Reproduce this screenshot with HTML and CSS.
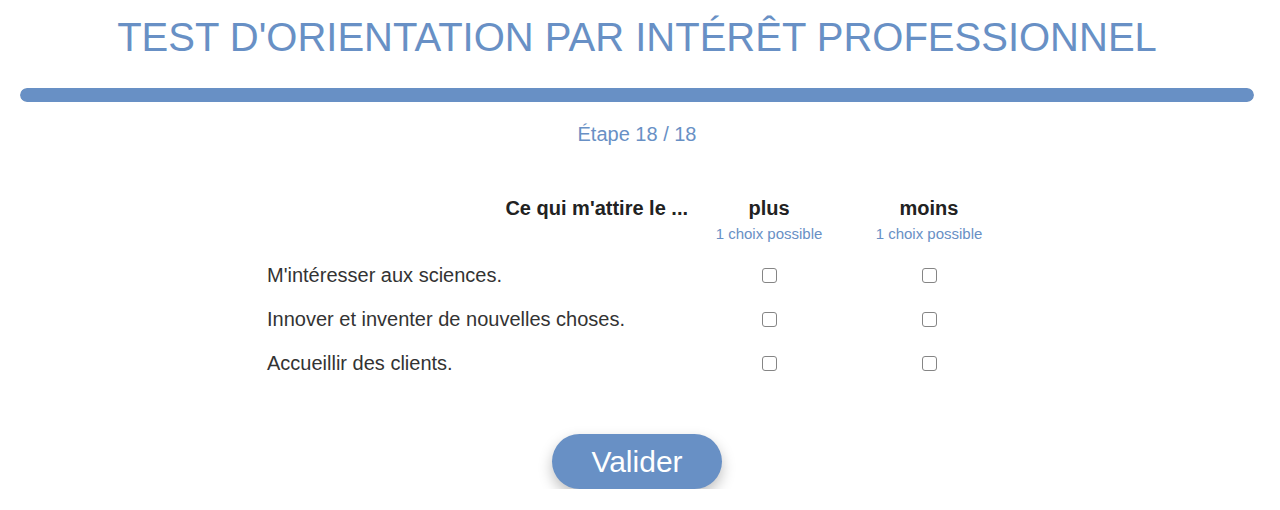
FILE: index.html
```html
<!DOCTYPE html>
<html lang="fr">
<head>
    <meta charset="UTF-8">
    <meta name="viewport" content="width=device-width, initial-scale=1.0">
    <title>Test d'orientation</title>
    <link rel="stylesheet" href="styles.css">
</head>
<body>
    <h1 class="title">TEST D'ORIENTATION PAR INTÉRÊT PROFESSIONNEL</h1>
    <div class="progress"><div class="progress-fill"></div></div>
    <p class="step">Étape 18 / 18</p>

    <form class="quiz">
        <div class="grid">
            <div class="head-label">Ce qui m'attire le ...</div>
            <div class="head-col">
                <span class="col-title">plus</span>
                <span class="col-sub">1 choix possible</span>
            </div>
            <div class="head-col">
                <span class="col-title">moins</span>
                <span class="col-sub">1 choix possible</span>
            </div>

            <div class="row-label">M'intéresser aux sciences.</div>
            <div class="cell"><input type="checkbox" name="plus" value="1"></div>
            <div class="cell"><input type="checkbox" name="moins" value="1"></div>

            <div class="row-label">Innover et inventer de nouvelles choses.</div>
            <div class="cell"><input type="checkbox" name="plus" value="2"></div>
            <div class="cell"><input type="checkbox" name="moins" value="2"></div>

            <div class="row-label">Accueillir des clients.</div>
            <div class="cell"><input type="checkbox" name="plus" value="3"></div>
            <div class="cell"><input type="checkbox" name="moins" value="3"></div>
        </div>

        <div class="actions">
            <button type="submit" class="btn">Valider</button>
        </div>
    </form>
</body>
</html>
```

FILE: styles.css
```css
body {
    font-family: "Liberation Sans", Arial, sans-serif;
    margin: 0;
    padding: 0 6px 0 0;
    background: #fff;
    color: #333;
}

.title {
    margin: 14px 0 0;
    font-size: 40px;
    line-height: 46px;
    font-weight: normal;
    text-align: center;
    color: #6890c5;
}

.progress {
    margin: 28px 20px 0 20px;
    height: 14px;
    border-radius: 7px;
    background: #e6e6e6;
    overflow: hidden;
}

.progress-fill {
    width: 100%;
    height: 100%;
    border-radius: 7px;
    background: #6890c5;
}

.step {
    margin: 20px 0 0;
    font-size: 20px;
    line-height: 24px;
    text-align: center;
    color: #6890c5;
}

.quiz {
    margin-top: 50px;
}

.grid {
    display: grid;
    grid-template-columns: 422px 160px 160px;
    justify-content: center;
    padding-left: 2px;
}

.head-label {
    font-size: 20px;
    font-weight: bold;
    line-height: 24px;
    text-align: right;
    color: #222;
    padding-right: 1px;
}

.head-col {
    display: flex;
    flex-direction: column;
    align-items: center;
    padding-bottom: 10px;
}

.col-title {
    font-size: 20px;
    font-weight: bold;
    line-height: 24px;
    color: #222;
}

.col-sub {
    margin-top: 5px;
    font-size: 15px;
    line-height: 18px;
    color: #6890c5;
}

.row-label {
    font-size: 20px;
    line-height: 44px;
    color: #333;
}

.cell {
    display: flex;
    justify-content: center;
    align-items: center;
    height: 44px;
}

.cell input {
    appearance: none;
    -webkit-appearance: none;
    margin: 0;
    width: 15px;
    height: 15px;
    border: 1px solid #858585;
    border-radius: 3px;
    background: #fff;
}

.actions {
    display: flex;
    justify-content: center;
    margin-top: 49px;
}

.btn {
    width: 170px;
    height: 55px;
    border: none;
    border-radius: 28px;
    background: #6890c5;
    color: #fff;
    font-family: "Liberation Sans", Arial, sans-serif;
    font-size: 30px;
    cursor: pointer;
    box-shadow: 0 6px 14px rgba(0,0,0,0.25);
}

.btn:hover {
    background: #5a80b3;
}
```
